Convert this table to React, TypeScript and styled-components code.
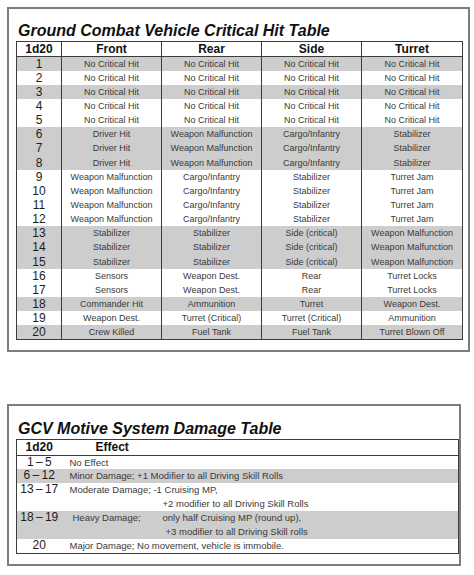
import styled, { createGlobalStyle } from 'styled-components'

const GlobalStyle = createGlobalStyle`
  body {
    margin: 0;
    background: #fff;
    font-family: "Liberation Sans", Arial, sans-serif;
  }
`

const Page = styled.div`
  display: flex;
  flex-direction: column;
  align-items: flex-start;
  padding: 7px 0 0 7px;
`

const Panel = styled.section<{ $width: number; $gapTop?: number }>`
  box-sizing: border-box;
  width: ${(p) => p.$width}px;
  margin-top: ${(p) => p.$gapTop ?? 0}px;
  border: 2px solid #7d7d7d;
  padding: 0 0 10px 7px;
`

const Title = styled.h2<{ $pad: number }>`
  margin: 0 0 1px 0;
  padding: ${(p) => p.$pad}px 0 0 2px;
  font-size: 16px;
  line-height: 19px;
  font-weight: bold;
  font-style: italic;
  color: #111;
`

const Table = styled.table<{ $width: number }>`
  width: ${(p) => p.$width}px;
  table-layout: fixed;
  border-collapse: collapse;
  border: 1px solid #3c3c3c;
`

const HeadCell = styled.th<{ $left?: number }>`
  padding: 0 0 0 ${(p) => p.$left ?? 0}px;
  font-size: 12px;
  line-height: 14px;
  font-weight: bold;
  color: #111;
  text-align: ${(p) => (p.$left ? 'left' : 'center')};
  border-bottom: 1px solid #3c3c3c;
`

const GridHead = styled(HeadCell)`
  border-left: 1px solid #3c3c3c;
`

const Row = styled.tr<{ $shade: boolean; $h: number }>`
  height: ${(p) => p.$h}px;
  background: ${(p) => (p.$shade ? '#cdcdcd' : '#fff')};
`

const NumCell = styled.td`
  padding: 0;
  font-size: 12px;
  line-height: 12px;
  color: #1c1c1c;
  text-align: center;
`

const HitCell = styled.td`
  padding: 0;
  font-size: 9px;
  line-height: 10px;
  color: #3a3a3a;
  text-align: center;
  border-left: 1px solid #3c3c3c;
`

const MotiveNum = styled.td`
  padding: 0;
  vertical-align: top;
  font-size: 12px;
  line-height: 13px;
  word-spacing: -1px;
  color: #1c1c1c;
  text-align: center;
`

const EffectCell = styled.td`
  padding: 0 0 0 8px;
  vertical-align: top;
  font-size: 9.5px;
  line-height: 13px;
  color: #3a3a3a;
`

const Line = styled.div<{ $indent?: number; $h?: number }>`
  height: ${(p) => p.$h ?? 14}px;
  line-height: ${(p) => p.$h ?? 14}px;
  white-space: nowrap;
  padding-left: ${(p) => p.$indent ?? 0}px;
`

const Stop = styled.span<{ $width: number }>`
  display: inline-block;
  width: ${(p) => p.$width}px;
`

type HitRow = [string, string, string, string, boolean]

const hits: HitRow[] = [
  ['No Critical Hit', 'No Critical Hit', 'No Critical Hit', 'No Critical Hit', true],
  ['No Critical Hit', 'No Critical Hit', 'No Critical Hit', 'No Critical Hit', false],
  ['No Critical Hit', 'No Critical Hit', 'No Critical Hit', 'No Critical Hit', true],
  ['No Critical Hit', 'No Critical Hit', 'No Critical Hit', 'No Critical Hit', false],
  ['No Critical Hit', 'No Critical Hit', 'No Critical Hit', 'No Critical Hit', false],
  ['Driver Hit', 'Weapon Malfunction', 'Cargo/Infantry', 'Stabilizer', true],
  ['Driver Hit', 'Weapon Malfunction', 'Cargo/Infantry', 'Stabilizer', true],
  ['Driver Hit', 'Weapon Malfunction', 'Cargo/Infantry', 'Stabilizer', true],
  ['Weapon Malfunction', 'Cargo/Infantry', 'Stabilizer', 'Turret Jam', false],
  ['Weapon Malfunction', 'Cargo/Infantry', 'Stabilizer', 'Turret Jam', false],
  ['Weapon Malfunction', 'Cargo/Infantry', 'Stabilizer', 'Turret Jam', false],
  ['Weapon Malfunction', 'Cargo/Infantry', 'Stabilizer', 'Turret Jam', false],
  ['Stabilizer', 'Stabilizer', 'Side (critical)', 'Weapon Malfunction', true],
  ['Stabilizer', 'Stabilizer', 'Side (critical)', 'Weapon Malfunction', true],
  ['Stabilizer', 'Stabilizer', 'Side (critical)', 'Weapon Malfunction', true],
  ['Sensors', 'Weapon Dest.', 'Rear', 'Turret Locks', false],
  ['Sensors', 'Weapon Dest.', 'Rear', 'Turret Locks', false],
  ['Commander Hit', 'Ammunition', 'Turret', 'Weapon Dest.', true],
  ['Weapon Dest.', 'Turret (Critical)', 'Turret (Critical)', 'Ammunition', false],
  ['Crew Killed', 'Fuel Tank', 'Fuel Tank', 'Turret Blown Off', true],
]

function App() {
  return (
    <Page>
      <GlobalStyle />
      <Panel $width={463}>
        <Title $pad={12}>Ground Combat Vehicle Critical Hit Table</Title>
        <Table $width={446}>
          <colgroup>
            <col style={{ width: 45 }} />
            <col style={{ width: 100 }} />
            <col style={{ width: 100 }} />
            <col style={{ width: 100 }} />
            <col style={{ width: 101 }} />
          </colgroup>
          <thead>
            <Row $shade={false} $h={15}>
              <HeadCell>1d20</HeadCell>
              <GridHead>Front</GridHead>
              <GridHead>Rear</GridHead>
              <GridHead>Side</GridHead>
              <GridHead>Turret</GridHead>
            </Row>
          </thead>
          <tbody>
            {hits.map(([front, rear, side, turret, shade], i) => (
              <Row key={i} $shade={shade} $h={14.15}>
                <NumCell>{i + 1}</NumCell>
                <HitCell>{front}</HitCell>
                <HitCell>{rear}</HitCell>
                <HitCell>{side}</HitCell>
                <HitCell>{turret}</HitCell>
              </Row>
            ))}
          </tbody>
        </Table>
      </Panel>

      <Panel $width={454} $gapTop={52}>
        <Title $pad={13}>GCV Motive System Damage Table</Title>
        <Table $width={443}>
          <colgroup>
            <col style={{ width: 45 }} />
            <col />
          </colgroup>
          <thead>
            <Row $shade={false} $h={16}>
              <HeadCell>1d20</HeadCell>
              <HeadCell $left={34}>Effect</HeadCell>
            </Row>
          </thead>
          <tbody>
            <Row $shade={false} $h={13}>
              <MotiveNum>1 – 5</MotiveNum>
              <EffectCell>
                <Line $h={13}>No Effect</Line>
              </EffectCell>
            </Row>
            <Row $shade={true} $h={14}>
              <MotiveNum>6 – 12</MotiveNum>
              <EffectCell>
                <Line>Minor Damage; +1 Modifier to all Driving Skill Rolls</Line>
              </EffectCell>
            </Row>
            <Row $shade={false} $h={28}>
              <MotiveNum>13 – 17</MotiveNum>
              <EffectCell>
                <Line>Moderate Damage; -1 Cruising MP,</Line>
                <Line $indent={93}>+2 modifier to all Driving Skill Rolls</Line>
              </EffectCell>
            </Row>
            <Row $shade={true} $h={28}>
              <MotiveNum>18 – 19</MotiveNum>
              <EffectCell>
                <Line $indent={3}>
                  <Stop $width={90}>Heavy Damage;</Stop>only half Cruising MP (round up),
                </Line>
                <Line $indent={96}>+3 modifier to all Driving Skill rolls</Line>
              </EffectCell>
            </Row>
            <Row $shade={false} $h={14}>
              <MotiveNum>20</MotiveNum>
              <EffectCell>
                <Line>Major Damage; No movement, vehicle is immobile.</Line>
              </EffectCell>
            </Row>
          </tbody>
        </Table>
      </Panel>
    </Page>
  )
}

export default App
